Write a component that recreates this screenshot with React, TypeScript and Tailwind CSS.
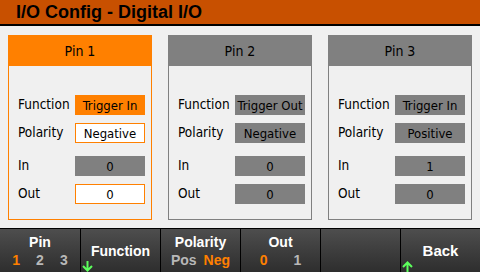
import type { ReactNode } from 'react';

type Tone = 'orange' | 'white' | 'gray';

interface PinData {
  name: string;
  active: boolean;
  fn: string;
  polarity: string;
  input: string;
  output: string;
}

const pins: PinData[] = [
  { name: 'Pin 1', active: true, fn: 'Trigger In', polarity: 'Negative', input: '0', output: '0' },
  { name: 'Pin 2', active: false, fn: 'Trigger Out', polarity: 'Negative', input: '0', output: '0' },
  { name: 'Pin 3', active: false, fn: 'Trigger In', polarity: 'Positive', input: '1', output: '0' },
];

const narrow = "font-['DejaVu_Sans_Condensed','DejaVu_Sans',sans-serif]";

function ValueBox({ tone, children }: { tone: Tone; children: ReactNode }) {
  const toneClass =
    tone === 'orange'
      ? 'bg-[#ff8000]'
      : tone === 'white'
        ? 'bg-white border border-[#ff8000]'
        : 'bg-[#808080]';
  return (
    <div
      className={`flex h-[20px] w-[70px] items-center justify-center whitespace-nowrap text-[13px] leading-none text-black ${toneClass}`}
    >
      {children}
    </div>
  );
}

function Row({ label, className, children }: { label: string; className?: string; children: ReactNode }) {
  return (
    <div className={`flex items-center justify-between ${className ?? ''}`}>
      <span className="text-[13.5px] leading-none text-black">{label}</span>
      {children}
    </div>
  );
}

function PinPanel({ pin }: { pin: PinData }) {
  const border = pin.active ? 'border-[#ff8000]' : 'border-[#808080]';
  return (
    <section className={`flex h-[185px] w-[144px] flex-col border ${border} ${narrow}`}>
      <div
        className={`flex h-[30px] items-center justify-center text-[14px] text-black ${
          pin.active ? 'bg-[#ff8000]' : 'bg-[#808080]'
        }`}
      >
        {pin.name}
      </div>
      <div className="flex flex-col pr-[6px] pl-[9px]">
        <Row label="Function" className="mt-[29px]">
          <ValueBox tone={pin.active ? 'orange' : 'gray'}>{pin.fn}</ValueBox>
        </Row>
        <Row label="Polarity" className="mt-[8px]">
          <ValueBox tone={pin.active ? 'white' : 'gray'}>{pin.polarity}</ValueBox>
        </Row>
        <Row label="In" className="mt-[13px]">
          <ValueBox tone="gray">{pin.input}</ValueBox>
        </Row>
        <Row label="Out" className="mt-[8px]">
          <ValueBox tone={pin.active ? 'white' : 'gray'}>{pin.output}</ValueBox>
        </Row>
      </div>
    </section>
  );
}

function Arrow({ up }: { up?: boolean }) {
  return (
    <svg
      className="absolute bottom-0 left-[1px] h-[11px] w-[11px]"
      viewBox="0 0 11 11"
      fill="none"
      stroke="#5cff5c"
      strokeWidth="2"
    >
      {up ? <path d="M5.5 11V1.5M1 6l4.5-4.5L10 6" /> : <path d="M5.5 0v9.5M1 5l4.5 4.5L10 5" />}
    </svg>
  );
}

function SoftKey({ children, arrow }: { children?: ReactNode; arrow?: 'up' | 'down' }) {
  return (
    <div className="relative flex w-[80px] flex-col items-center justify-center border-l border-black bg-gradient-to-b from-[#4e4e4e] to-[#2e2e2e] text-white first:border-l-0">
      {children}
      {arrow && <Arrow up={arrow === 'up'} />}
    </div>
  );
}

export default function App() {
  return (
    <div className="flex h-[272px] w-[480px] flex-col overflow-hidden bg-[#f0f0f0]">
      <header className="flex h-[26px] items-center border-b-2 border-black bg-[#c85000] pl-[16px] font-['Liberation_Sans',sans-serif] text-[18px] font-bold text-black">
        I/O Config - Digital I/O
      </header>

      <div className="flex gap-[16px] px-[8px] pt-[9px]">
        {pins.map((pin) => (
          <PinPanel key={pin.name} pin={pin} />
        ))}
      </div>

      <footer className="mt-auto flex h-[44px] border-t border-black font-['Liberation_Sans',sans-serif] text-[14px] font-bold leading-none">
        <SoftKey>
          <span>Pin</span>
          <span className="mt-[4px] flex gap-[16px]">
            <span className="text-[#ff8000]">1</span>
            <span className="text-[#b8b8b8]">2</span>
            <span className="text-[#b8b8b8]">3</span>
          </span>
        </SoftKey>
        <SoftKey arrow="down">
          <span>Function</span>
        </SoftKey>
        <SoftKey>
          <span>Polarity</span>
          <span className="mt-[4px] flex gap-[7px]">
            <span className="text-[#b8b8b8]">Pos</span>
            <span className="text-[#ff8000]">Neg</span>
          </span>
        </SoftKey>
        <SoftKey>
          <span>Out</span>
          <span className="mt-[4px] flex gap-[26px]">
            <span className="text-[#ff8000]">0</span>
            <span className="text-[#b8b8b8]">1</span>
          </span>
        </SoftKey>
        <SoftKey />
        <SoftKey arrow="up">
          <span className="text-[15px]">Back</span>
        </SoftKey>
      </footer>
    </div>
  );
}
